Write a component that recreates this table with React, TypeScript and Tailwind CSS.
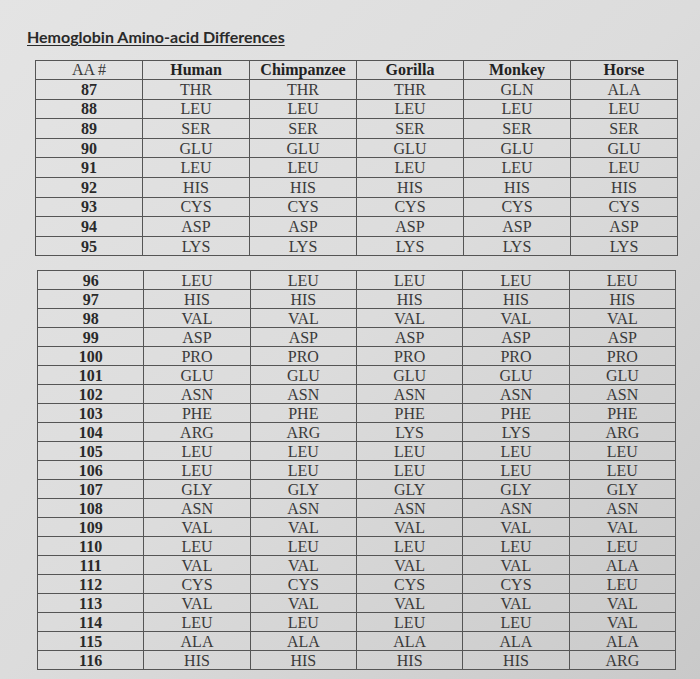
import React from "react"

const top: string[][] = [
    ["87", "THR", "THR", "THR", "GLN", "ALA"],
    ["88", "LEU", "LEU", "LEU", "LEU", "LEU"],
    ["89", "SER", "SER", "SER", "SER", "SER"],
    ["90", "GLU", "GLU", "GLU", "GLU", "GLU"],
    ["91", "LEU", "LEU", "LEU", "LEU", "LEU"],
    ["92", "HIS", "HIS", "HIS", "HIS", "HIS"],
    ["93", "CYS", "CYS", "CYS", "CYS", "CYS"],
    ["94", "ASP", "ASP", "ASP", "ASP", "ASP"],
    ["95", "LYS", "LYS", "LYS", "LYS", "LYS"],
]

const bottom: string[][] = [
    ["96", "LEU", "LEU", "LEU", "LEU", "LEU"],
    ["97", "HIS", "HIS", "HIS", "HIS", "HIS"],
    ["98", "VAL", "VAL", "VAL", "VAL", "VAL"],
    ["99", "ASP", "ASP", "ASP", "ASP", "ASP"],
    ["100", "PRO", "PRO", "PRO", "PRO", "PRO"],
    ["101", "GLU", "GLU", "GLU", "GLU", "GLU"],
    ["102", "ASN", "ASN", "ASN", "ASN", "ASN"],
    ["103", "PHE", "PHE", "PHE", "PHE", "PHE"],
    ["104", "ARG", "ARG", "LYS", "LYS", "ARG"],
    ["105", "LEU", "LEU", "LEU", "LEU", "LEU"],
    ["106", "LEU", "LEU", "LEU", "LEU", "LEU"],
    ["107", "GLY", "GLY", "GLY", "GLY", "GLY"],
    ["108", "ASN", "ASN", "ASN", "ASN", "ASN"],
    ["109", "VAL", "VAL", "VAL", "VAL", "VAL"],
    ["110", "LEU", "LEU", "LEU", "LEU", "LEU"],
    ["111", "VAL", "VAL", "VAL", "VAL", "ALA"],
    ["112", "CYS", "CYS", "CYS", "CYS", "LEU"],
    ["113", "VAL", "VAL", "VAL", "VAL", "VAL"],
    ["114", "LEU", "LEU", "LEU", "LEU", "VAL"],
    ["115", "ALA", "ALA", "ALA", "ALA", "ALA"],
    ["116", "HIS", "HIS", "HIS", "HIS", "ARG"],
]

const headers = ["AA #", "Human", "Chimpanzee", "Gorilla", "Monkey", "Horse"]

function AminoTable({ rows, header, rowH }: { rows: string[][]; header?: boolean; rowH: string }) {
    return (
        <table className="w-full table-fixed border-collapse border-[1.5px] border-[#4a4a4a] text-[16px] leading-none text-[#3a3a3a]">
            <tbody>
                {header && (
                    <tr className="h-[19px]">
                        {headers.map((h, i) => (
                            <td key={h} className={`border border-[#555] p-0 text-center ${i === 0 ? "font-normal" : "font-bold text-[#222]"}`}>
                                {h}
                            </td>
                        ))}
                    </tr>
                )}
                {rows.map((r) => (
                    <tr key={r[0]} className={rowH}>
                        {r.map((c, i) => (
                            <td key={i} className={`border border-[#555] p-0 pt-[1px] text-center ${i === 0 ? "font-bold text-[#2a2a2a]" : ""}`}>
                                {c}
                            </td>
                        ))}
                    </tr>
                ))}
            </tbody>
        </table>
    )
}

export default function App() {
    return (
        <div className="h-[679px] w-[700px] overflow-hidden bg-gradient-to-br from-[#e4e4e4] via-[#dcdcdc] to-[#c9c9c9] font-['Liberation_Serif',serif]">
            <div className="pl-[27px] pt-[29px]">
                <h1 className="font-['Lato',sans-serif] text-[16px] font-bold leading-none text-[#2a2a2a] underline underline-offset-2">
                    Hemoglobin Amino-acid Differences
                </h1>
            </div>
            <div className="ml-[35px] mt-[15px] w-[643px]">
                <AminoTable rows={top} header rowH="h-[19.6px]" />
            </div>
            <div className="ml-[37px] mt-[14px] w-[639px]">
                <AminoTable rows={bottom} rowH="h-[19px]" />
            </div>
        </div>
    )
}
